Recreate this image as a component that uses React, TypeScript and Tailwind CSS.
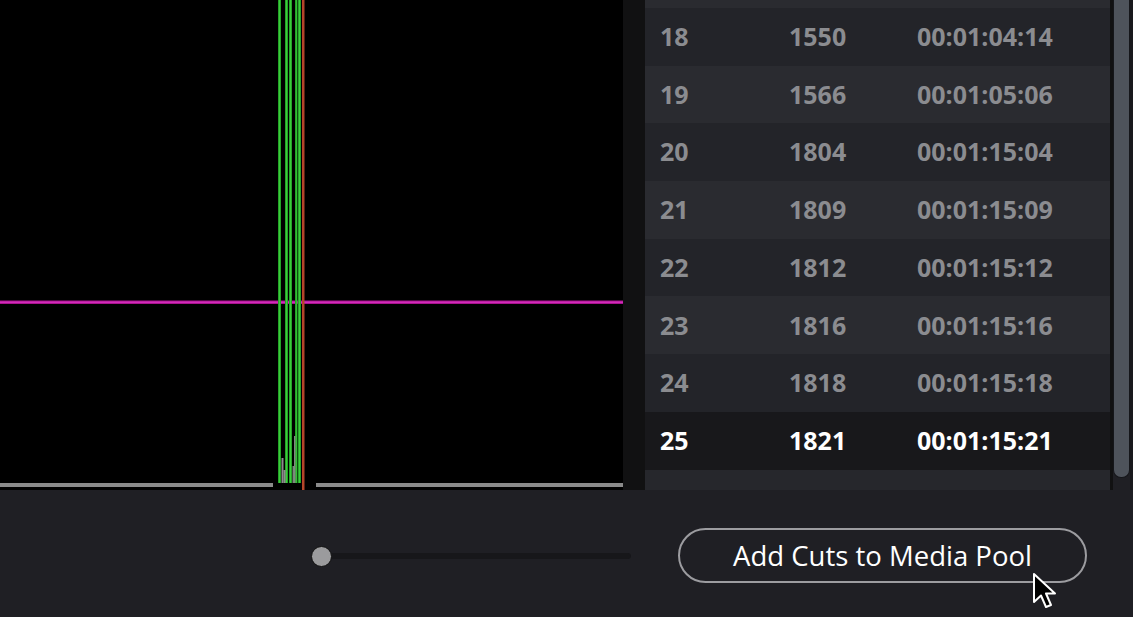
import React from 'react';

const rows = [
  { n: 18, frame: 1550, tc: '00:01:04:14' },
  { n: 19, frame: 1566, tc: '00:01:05:06' },
  { n: 20, frame: 1804, tc: '00:01:15:04' },
  { n: 21, frame: 1809, tc: '00:01:15:09' },
  { n: 22, frame: 1812, tc: '00:01:15:12' },
  { n: 23, frame: 1816, tc: '00:01:15:16' },
  { n: 24, frame: 1818, tc: '00:01:15:18' },
  { n: 25, frame: 1821, tc: '00:01:15:21', selected: true },
];

function Scope() {
  const greens = [
    [278, 3],
    [285, 3],
    [289, 3],
    [295, 2.5],
    [298, 3],
  ];
  return (
    <svg width="623" height="490" viewBox="0 0 623 490" className="block">
      <rect width="623" height="490" fill="#000" />
      {/* magenta threshold */}
      <rect x="0" y="300.5" width="623" height="3.5" fill="#a8138f" />
      <rect x="0" y="301.5" width="623" height="1.5" fill="#d22cba" />
      {/* baseline */}
      <rect x="0" y="483" width="273" height="4" fill="#8a8a8a" />
      <rect x="316" y="483" width="307" height="4" fill="#8a8a8a" />
      {/* cut spikes */}
      {greens.map(([x, w]) => (
        <g key={x}>
          <rect x={x} y="0" width={w} height="483" fill="#1e9a22" />
          <rect x={x + 0.8} y="0" width={w - 1.6} height="483" fill="#3ccc3c" />
        </g>
      ))}
      <rect x="281.5" y="458" width="2" height="25" fill="#8c8c8c" />
      <rect x="283.5" y="470" width="2" height="13" fill="#8c8c8c" />
      <rect x="292.5" y="466" width="2" height="17" fill="#7a8a7a" />
      <rect x="294" y="436" width="1.5" height="47" fill="#7c8c7c" />
      <rect x="302" y="0" width="2.5" height="490" fill="#b4452a" />
    </svg>
  );
}

function Cursor() {
  return (
    <svg width="28" height="40" viewBox="0 0 28 40" className="absolute left-[1031px] top-[572px]">
      <path
        d="M3 2 L3 30 L10 23.5 L15 35 L20 33 L15 21.5 L24 21.5 Z"
        fill="#000"
        stroke="#fff"
        strokeWidth="2"
        strokeLinejoin="round"
      />
    </svg>
  );
}

export default function App() {
  return (
    <div
      className="relative w-[1133px] h-[617px] overflow-hidden bg-[#1f1f24]"
      style={{ fontFamily: '"Open Sans", "Noto Sans", sans-serif' }}
    >
      <div className="flex h-[490px]">
        <Scope />
        <div className="w-[22px] bg-[#111112]" />
        <div className="w-[465px] flex flex-col">
          <div className="h-[8px] bg-[#2a2b30]" />
          {rows.map((r, i) => (
            <div
              key={r.n}
              className={`h-[57.7px] shrink-0 flex items-center pl-[15px] text-[25px] font-bold ${
                r.selected
                  ? 'bg-[#18181b] text-white'
                  : i % 2 === 0
                  ? 'bg-[#232429] text-[#8b8c90]'
                  : 'bg-[#2a2b30] text-[#8b8c90]'
              }`}
            >
              <span className="w-[129px]">{r.n}</span>
              <span className="w-[128px]">{r.frame}</span>
              <span>{r.tc}</span>
            </div>
          ))}
          <div className="flex-1 bg-[#26272c]" />
        </div>
        <div className="w-[3px] bg-[#111112]" />
        <div className="w-[17px] flex flex-col bg-[#1f1f24]">
          <div className="h-[478px] bg-[#4e535b] rounded-b-[8px] border-x border-b border-[#15161a]" />
        </div>
        <div className="w-[3px] bg-[#18181c]" />
      </div>

      <div className="flex items-center h-[127px] pt-[4px]">
        <div className="ml-[311px] w-[320px] h-[20px] relative flex items-center">
          <div className="ml-[8px] w-[312px] h-[6px] rounded-full bg-[#17171a]" />
          <div className="absolute left-0 top-0 w-[21px] h-[21px] rounded-full bg-[#9b9b9d] border border-[#111]" />
        </div>
        <button className="ml-[47px] w-[409px] h-[55px] rounded-full border-2 border-[#9c9ca0] text-white text-[27.5px] leading-none flex items-center justify-center">
          Add Cuts to Media Pool
        </button>
      </div>
      <Cursor />
    </div>
  );
}
